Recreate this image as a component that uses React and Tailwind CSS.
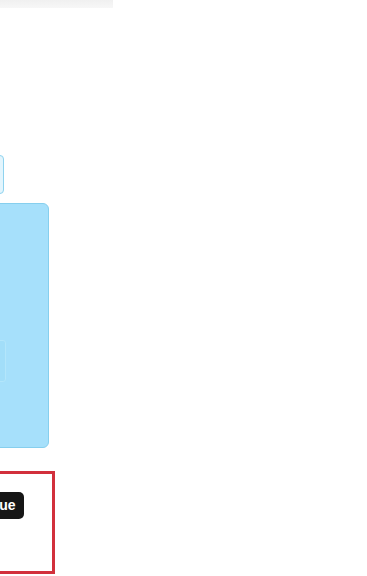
export default function App() {
  return (
    <div className="relative w-[367px] h-[576px] overflow-hidden bg-white" style={{ fontFamily: '"Liberation Sans", Arial, sans-serif' }}>
      <div className="h-[8px] w-[113px] bg-gradient-to-b from-[#f0f0f0] to-[#f7f7f7]" />
      <div className="mt-[147px] -ml-[40px] w-[44px] h-[39px] rounded-[4px] border border-[#8fd3ef] bg-[#e3f5fd]" />
      <div className="mt-[9px] -ml-[40px] w-[89px] h-[245px] rounded-[6px] border border-[#86cfee] bg-[#a6e0fb] flex items-center">
        <div className="ml-[30px] mt-[70px] w-[15px] h-[42px] rounded-[3px] border border-[#b3e6fb] bg-[#a2def9]" />
      </div>
      <div className="mt-[23px] -ml-[40px] w-[95px] h-[103px] border-[3px] border-[#d2303c] pt-[18px]">
        <div className="ml-[10px] inline-flex h-[27px] items-center rounded-[5px] bg-[#161616] pl-[6px] pr-[8px] text-[14px] font-bold text-white">
          Value
        </div>
      </div>
    </div>
  );
}
